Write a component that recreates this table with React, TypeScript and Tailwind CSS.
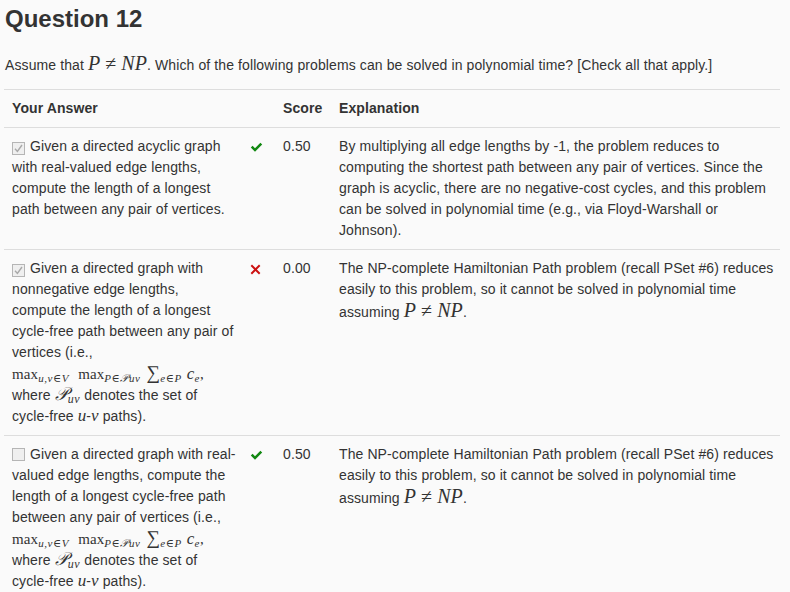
import React from 'react'

const serif = 'font-["Liberation_Serif","DejaVu_Serif",serif]'

function M({ children }: { children: React.ReactNode }) {
  return <span className={`${serif} italic text-[17px] leading-none`}>{children}</span>
}

function PneqNP() {
  return (
    <span className={`${serif} text-[20px] leading-none`}>
      <i>P</i>
      <span className="mx-[5px]">≠</span>
      <i>NP</i>
    </span>
  )
}

function Sub({ children, className = '' }: { children: React.ReactNode; className?: string }) {
  return (
    <span className={`italic text-[11px] leading-none align-[-3px] tracking-[0.6px] ${className}`}>
      {children}
    </span>
  )
}

function MaxFormula() {
  return (
    <span className={`${serif} text-[15px] leading-none whitespace-nowrap`}>
      max<Sub>u,v∈V</Sub>
      <span className="ml-[9px]">max</span>
      <Sub>P∈𝒫uv</Sub>
      <span className="ml-[6px] text-[19px]">∑</span>
      <Sub>e∈P</Sub>
      <i className="ml-[5px] text-[17px]">c</i>
      <Sub>e</Sub>,
    </span>
  )
}

function Puv() {
  return (
    <span className={`${serif} italic text-[18px] leading-none`}>
      𝒫<Sub className="text-[12px]">uv</Sub>
    </span>
  )
}

function Box({ checked }: { checked: boolean }) {
  return (
    <span className="inline-flex items-center justify-center w-[13px] h-[13px] border border-[#b5b5b5] bg-[#efefef] align-[-2px] mr-[5px]">
      {checked && (
        <svg width="9" height="9" viewBox="0 0 9 9">
          <path d="M1 4.8 L3.4 7.4 L8 1" fill="none" stroke="#a8a8a8" strokeWidth="1.4" />
        </svg>
      )}
    </span>
  )
}

function Ok() {
  return (
    <svg width="13" height="11" viewBox="0 0 13 11">
      <path d="M0.8 5.6 L2.6 3.8 L5 6.2 L10.4 0.8 L12.2 2.6 L5 9.8 Z" fill="#118811" />
    </svg>
  )
}

function Bad() {
  return (
    <svg width="11" height="11" viewBox="0 0 11 11">
      <path d="M2 0.6 L5.5 4.1 L9 0.6 L10.4 2 L6.9 5.5 L10.4 9 L9 10.4 L5.5 6.9 L2 10.4 L0.6 9 L4.1 5.5 L0.6 2 Z" fill="#cc1111" />
    </svg>
  )
}

const hamilton = (
  <>
    The NP-complete Hamiltonian Path problem (recall PSet #6) reduces
    <br />
    easily to this problem, so it cannot be solved in polynomial time
    <br />
    assuming <PneqNP />.
  </>
)

const tail = (
  <>
    <MaxFormula />
    <br />
    where <Puv /> denotes the set of
    <br />
    cycle-free <M>u</M>-<M>v</M> paths).
  </>
)

const rows = [
  {
    checked: true,
    ok: true,
    score: '0.50',
    answer: (
      <>
        Given a directed acyclic graph
        <br />
        with real-valued edge lengths,
        <br />
        compute the length of a longest
        <br />
        path between any pair of vertices.
      </>
    ),
    expl: (
      <>
        By multiplying all edge lengths by -1, the problem reduces to
        <br />
        computing the shortest path between any pair of vertices. Since the
        <br />
        graph is acyclic, there are no negative-cost cycles, and this problem
        <br />
        can be solved in polynomial time (e.g., via Floyd-Warshall or
        <br />
        Johnson).
      </>
    ),
  },
  {
    checked: true,
    ok: false,
    score: '0.00',
    answer: (
      <>
        Given a directed graph with
        <br />
        nonnegative edge lengths,
        <br />
        compute the length of a longest
        <br />
        cycle-free path between any pair of
        <br />
        vertices (i.e.,
        <br />
        {tail}
      </>
    ),
    expl: hamilton,
  },
  {
    checked: false,
    ok: true,
    score: '0.50',
    answer: (
      <>
        Given a directed graph with real-
        <br />
        valued edge lengths, compute the
        <br />
        length of a longest cycle-free path
        <br />
        between any pair of vertices (i.e.,
        <br />
        {tail}
      </>
    ),
    expl: hamilton,
  },
]

export default function App() {
  return (
    <div className='min-h-[592px] bg-[#fafafa] text-[#333] font-["Liberation_Sans",Arial,sans-serif] pl-[4px] pt-[6px]'>
      <h2 className="text-[24px] leading-[26px] font-bold pl-[1px]">Question 12</h2>
      <p className="text-[14px] leading-[21px] mt-[21px] pl-[1px] tracking-[0.1px]">
        Assume that <PneqNP />. Which of the following problems can be solved in polynomial time?
        [Check all that apply.]
      </p>
      <table className="mt-[13px] w-[776px] border-collapse text-[14px] leading-[21px] tracking-[0.1px]">
        <thead>
          <tr className="border-y border-[#ddd]">
            <th className="text-left font-bold px-2 py-2 w-[240px]">Your Answer</th>
            <th className="w-[31px]"></th>
            <th className="text-left font-bold px-2 py-2 w-[56px]">Score</th>
            <th className="text-left font-bold px-2 py-2">Explanation</th>
          </tr>
        </thead>
        <tbody>
          {rows.map((r, i) => (
            <tr key={i} className="border-b border-[#ddd] align-top">
              <td className="px-2 py-2 whitespace-nowrap">
                <Box checked={r.checked} />
                {r.answer}
              </td>
              <td className="pt-[14px] pl-[6px]">{r.ok ? <Ok /> : <Bad />}</td>
              <td className="px-2 py-2">{r.score}</td>
              <td className="pl-2 pr-[4px] py-2 whitespace-nowrap">{r.expl}</td>
            </tr>
          ))}
        </tbody>
      </table>
    </div>
  )
}
